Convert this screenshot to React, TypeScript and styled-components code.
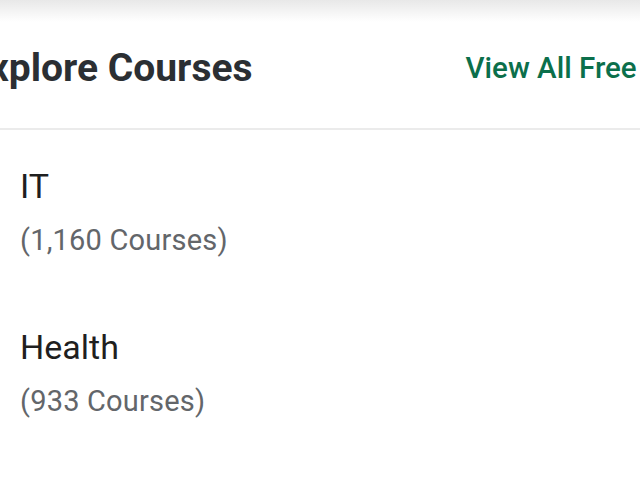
import React from "react";
import styled, { createGlobalStyle } from "styled-components";

const Global = createGlobalStyle`
  html, body { margin: 0; padding: 0; background: #ffffff; }
  body { font-family: Roboto, "Noto Sans", Arial, sans-serif; overflow: hidden; }
`;

const Page = styled.div`
  width: 640px;
  height: 479px;
  overflow: hidden;
  background: #fff;
  position: relative;
`;

const TopShade = styled.div`
  height: 0;
  &::before {
    content: "";
    position: absolute;
    left: 0;
    right: 0;
    top: 0;
    height: 22px;
    background: linear-gradient(#e8e8e8, rgba(255, 255, 255, 0));
  }
`;

const Header = styled.header`
  display: flex;
  align-items: flex-start;
  gap: 213px;
  height: 130px;
  box-sizing: border-box;
  padding-top: 46px;
  margin-left: -33px;
  border-bottom: 2px solid #ebebeb;
`;

const Title = styled.h1`
  margin: 0;
  flex: none;
  font-size: 39px;
  line-height: 45px;
  font-weight: 700;
  color: #2b2f33;
  white-space: nowrap;
`;

const ViewAll = styled.a`
  flex: none;
  margin-top: 5px;
  font-size: 29.5px;
  line-height: 34px;
  font-weight: 500;
  color: #0b6f4b;
  text-decoration: none;
  white-space: nowrap;
`;

const List = styled.ul`
  list-style: none;
  margin: 0;
  padding: 0;
`;

const Item = styled.li`
  padding: 36px 20px 33px;
  display: flex;
  flex-direction: column;
  gap: 16px;
`;

const Name = styled.div`
  font-size: 34px;
  line-height: 40px;
  color: #1f1f1f;
`;

const Count = styled.div`
  font-size: 29px;
  line-height: 36px;
  letter-spacing: 0.2px;
  color: #63666a;
`;

const categories = [
  { name: "IT", count: "1,160" },
  { name: "Health", count: "933" },
];

export default function App() {
  return (
    <Page>
      <Global />
      <TopShade />
      <Header>
        <Title>Explore Courses</Title>
        <ViewAll href="#">View All Free Courses</ViewAll>
      </Header>
      <List>
        {categories.map((c) => (
          <Item key={c.name}>
            <Name>{c.name}</Name>
            <Count>({c.count} Courses)</Count>
          </Item>
        ))}
      </List>
    </Page>
  );
}
